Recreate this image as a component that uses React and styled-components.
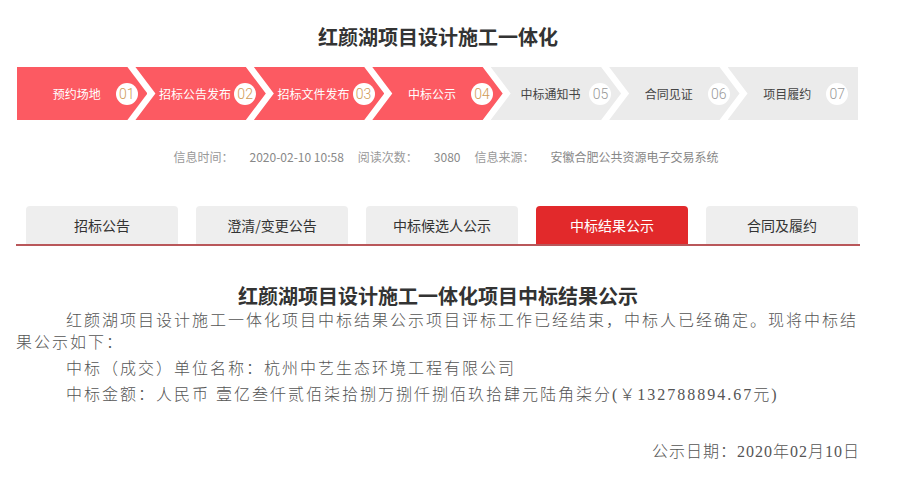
import React from 'react';
import styled, { createGlobalStyle } from 'styled-components';

const GlobalStyle = createGlobalStyle`
  body {
    margin: 0;
    background: #fff;
    font-family: 'Noto Sans CJK SC', 'Noto Sans', sans-serif;
  }
`;

const Page = styled.div`
  width: 844px;
  margin-left: 16px;
`;

const Title = styled.h1`
  margin: 0;
  padding-top: 23px;
  font-size: 20px;
  line-height: 28px;
  font-weight: 700;
  color: #333;
  text-align: center;
`;

const Steps = styled.div`
  display: flex;
  height: 53px;
  margin: 16px 2px 0 1px;
`;

const TIP = 20;

const clipFor = (first, last) => {
  if (first) {
    return `polygon(0 0, calc(100% - ${TIP}px) 0, 100% 50%, calc(100% - ${TIP}px) 100%, 0 100%)`;
  }
  if (last) {
    return `polygon(0 0, 100% 0, 100% 100%, 0 100%, ${TIP}px 50%)`;
  }
  return `polygon(0 0, calc(100% - ${TIP}px) 0, 100% 50%, calc(100% - ${TIP}px) 100%, 0 100%, ${TIP}px 50%)`;
};

const Step = styled.div`
  flex: 1;
  min-width: 0;
  display: flex;
  align-items: center;
  justify-content: center;
  margin-left: ${(p) => (p.$first ? 0 : -12)}px;
  padding: 0 8px 0 20px;
  background: ${(p) => (p.$done ? '#fc5a62' : '#ebebeb')};
  color: ${(p) => (p.$done ? '#fff' : '#444')};
  clip-path: ${(p) => clipFor(p.$first, p.$last)};
`;

const StepLabel = styled.span`
  width: 76px;
  font-size: 12px;
  text-align: center;
  white-space: nowrap;
`;

const StepNum = styled.span`
  width: 22px;
  height: 22px;
  margin-left: 1px;
  border-radius: 50%;
  background: #fff;
  display: flex;
  align-items: center;
  justify-content: center;
  font-family: Roboto, 'Liberation Sans', sans-serif;
  font-weight: 300;
  font-size: 14px;
  color: ${(p) => (p.$done ? '#d09a55' : '#999')};
`;

const Info = styled.div`
  display: flex;
  justify-content: center;
  margin-top: 28px;
  padding-left: 16px;
  font-size: 12px;
  line-height: 18px;
  color: #999;
  gap: 14px;
`;

const InfoItem = styled.span`
  display: flex;
  gap: 16px;
`;

const InfoValue = styled.span`
  color: #888;
`;

const TabBar = styled.div`
  display: flex;
  gap: 18px;
  margin-top: 40px;
  padding-left: 10px;
  border-bottom: 2px solid #b9575a;
`;

const Tab = styled.div`
  width: 152px;
  height: 38px;
  display: flex;
  align-items: center;
  justify-content: center;
  border-radius: 4px 4px 0 0;
  font-size: 14px;
  background: ${(p) => (p.$active ? '#e2292b' : '#eeeeee')};
  color: ${(p) => (p.$active ? '#fff' : '#333')};
`;

const Heading = styled.h2`
  margin: 36px 0 0;
  font-size: 20px;
  line-height: 28px;
  font-weight: 700;
  color: #333;
  text-align: center;
`;

const Para = styled.p`
  margin: 0 0 4px;
  text-indent: 50px;
  font-family: 'Liberation Serif', 'Noto Sans CJK SC', serif;
  font-weight: 300;
  font-size: 16px;
  letter-spacing: 2px;
  line-height: 22px;
  color: #555;
`;

const DateLine = styled(Para)`
  margin-top: 35px;
  text-indent: 0;
  text-align: right;
  letter-spacing: 1px;
`;

const steps = [
  '预约场地',
  '招标公告发布',
  '招标文件发布',
  '中标公示',
  '中标通知书',
  '合同见证',
  '项目履约',
];
const doneCount = 4;

const tabs = ['招标公告', '澄清/变更公告', '中标候选人公示', '中标结果公示', '合同及履约'];
const activeTab = 3;

export default function App() {
  return (
    <>
      <GlobalStyle />
      <Page>
        <Title>红颜湖项目设计施工一体化</Title>

        <Steps>
          {steps.map((name, i) => (
            <Step
              key={name}
              $first={i === 0}
              $last={i === steps.length - 1}
              $done={i < doneCount}
            >
              <StepLabel>{name}</StepLabel>
              <StepNum $done={i < doneCount}>{String(i + 1).padStart(2, '0')}</StepNum>
            </Step>
          ))}
        </Steps>

        <Info>
          <InfoItem>
            信息时间：<InfoValue>2020-02-10 10:58</InfoValue>
          </InfoItem>
          <InfoItem>
            阅读次数：<InfoValue>3080</InfoValue>
          </InfoItem>
          <InfoItem>
            信息来源：<InfoValue>安徽合肥公共资源电子交易系统</InfoValue>
          </InfoItem>
        </Info>

        <TabBar>
          {tabs.map((t, i) => (
            <Tab key={t} $active={i === activeTab}>
              {t}
            </Tab>
          ))}
        </TabBar>

        <Heading>红颜湖项目设计施工一体化项目中标结果公示</Heading>
        <Para>
          红颜湖项目设计施工一体化项目中标结果公示项目评标工作已经结束，中标人已经确定。现将中标结果公示如下：
        </Para>
        <Para>中标（成交）单位名称：杭州中艺生态环境工程有限公司</Para>
        <Para>中标金额：人民币 壹亿叁仟贰佰柒拾捌万捌仟捌佰玖拾肆元陆角柒分(￥132788894.67元)</Para>
        <DateLine>公示日期：2020年02月10日</DateLine>
      </Page>
    </>
  );
}
